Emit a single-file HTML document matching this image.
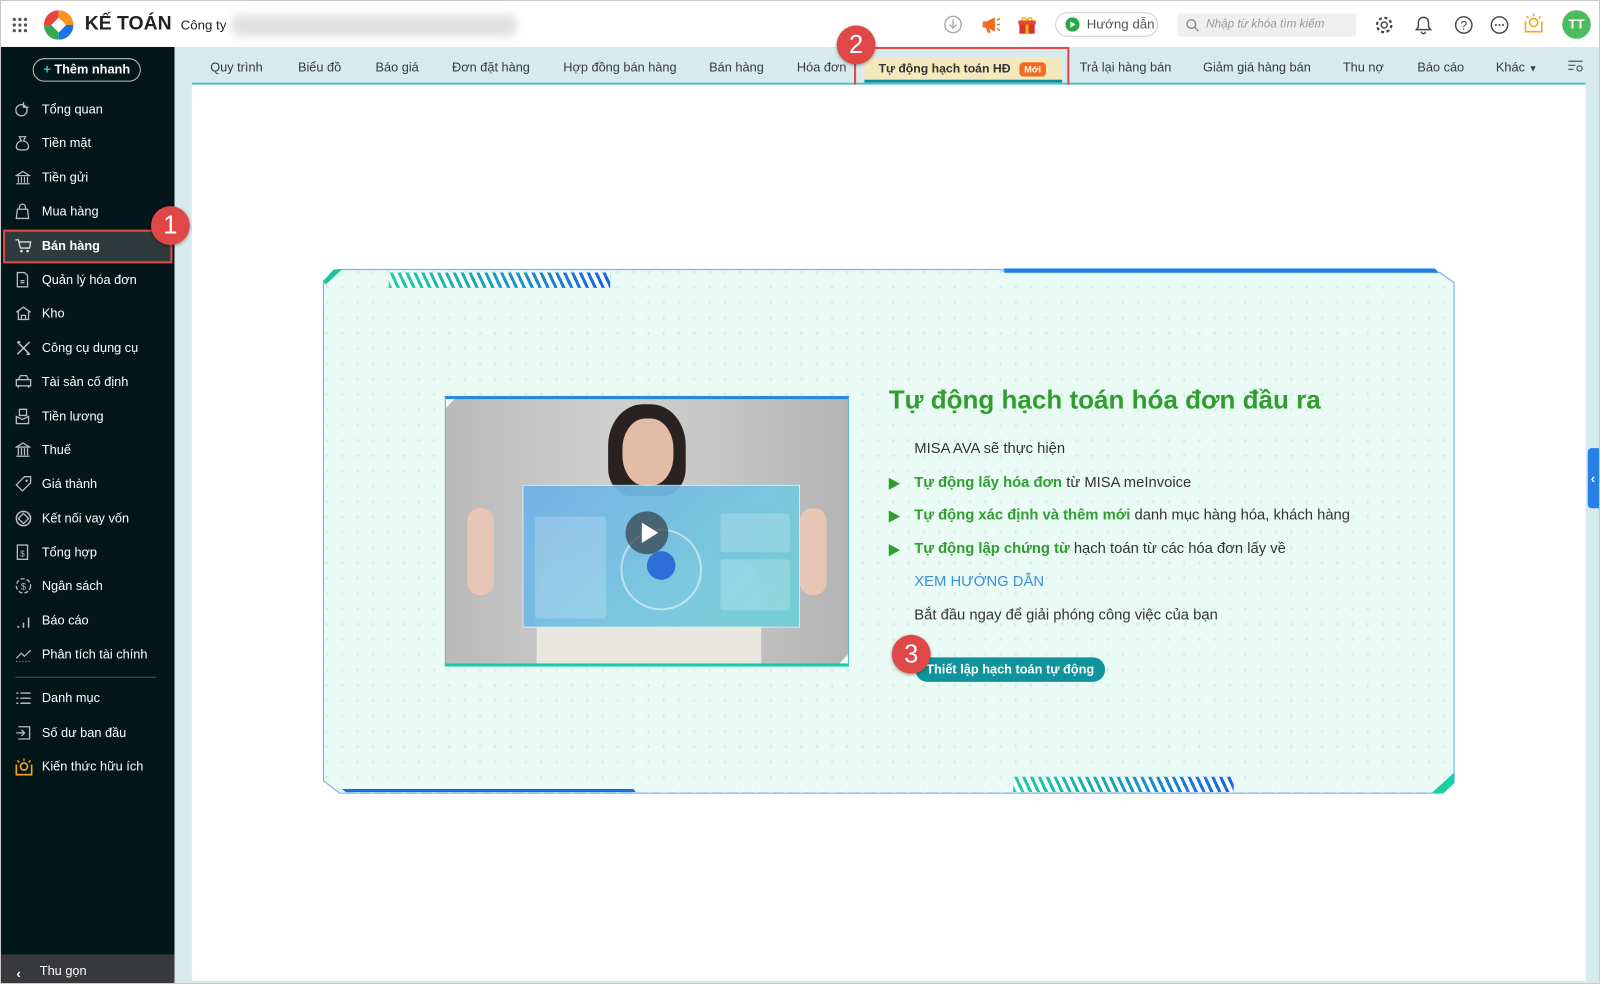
<!DOCTYPE html>
<html><head><meta charset="utf-8">
<style>
*{box-sizing:border-box;margin:0;padding:0}
html,body{width:1600px;height:984px;overflow:hidden;background:#fff;font-family:"Liberation Sans","Noto Sans CJK SC",sans-serif}
#w{position:absolute;left:0;top:0;width:1568px;height:964px;transform:scale(1.0204,1.0207);transform-origin:0 0;border:1px solid #c9c9c9;background:#d7ebee;overflow:hidden}
.a{position:absolute}
.top{left:0;top:0;width:1568px;height:45px;background:#fff}
.side{left:0;top:45px;width:170px;height:919px;background:#03161a}
.mi{position:absolute;left:0;width:170px;height:32px;color:#fff;font-size:12.5px;line-height:32px;padding-left:40px}
.mi svg{position:absolute;left:14px;top:8px}
.tab{position:absolute;top:58px;font-size:12.5px;color:#3a3a3a}
.ic{position:absolute;top:14px}
.txt{position:absolute;left:895px;font-size:14.5px;color:#333}
.g{color:#2f9e2f;font-weight:bold}
.arr{position:absolute;left:870px;width:0;height:0;border-left:11px solid #2f9e2f;border-top:6px solid transparent;border-bottom:6px solid transparent}
.badge{position:absolute;width:38px;height:38px;border-radius:50%;background:#e04848;color:#fff;font-size:25px;text-align:center;line-height:38px;box-shadow:0 1px 3px rgba(0,0,0,.4)}
</style></head><body>
<div id="w">
<div class="a top">
  <svg class="a" style="left:11px;top:16px" width="15" height="15"><g fill="#555"><circle cx="2" cy="2" r="1.6"/><circle cx="7.5" cy="2" r="1.6"/><circle cx="13" cy="2" r="1.6"/><circle cx="2" cy="7.5" r="1.6"/><circle cx="7.5" cy="7.5" r="1.6"/><circle cx="13" cy="7.5" r="1.6"/><circle cx="2" cy="13" r="1.6"/><circle cx="7.5" cy="13" r="1.6"/><circle cx="13" cy="13" r="1.6"/></g></svg>
  <svg class="a" style="left:42px;top:9px" width="29" height="29" viewBox="0 0 28 28"><path d="M14 0A14 14 0 0 0 0 14L14 14Z" fill="#e8453c"/><path d="M14 0A14 14 0 0 1 28 14L14 14Z" fill="#f7931e"/><path d="M28 14A14 14 0 0 1 14 28L14 14Z" fill="#1a73e8"/><path d="M14 28A14 14 0 0 1 0 14L14 14Z" fill="#34a853"/><rect x="9" y="9" width="10" height="10" fill="#fff" transform="rotate(45 14 14)"/></svg>
  <div class="a" style="left:82px;top:12px;font-size:19px;font-weight:bold;color:#222">KẾ TOÁN</div>
  <div class="a" style="left:176px;top:16px;font-size:13px;color:#222">Công ty</div>
  <div class="a" style="left:226px;top:13px;width:280px;height:22px;background:#e2e2e2;filter:blur(4px);border-radius:8px"></div>
  <svg class="ic" style="left:924px" width="18" height="18"><circle cx="9" cy="9" r="8" fill="none" stroke="#aaa" stroke-width="1.4"/><path d="M9 4v8M5.5 9l3.5 3.5 3.5-3.5" stroke="#aaa" stroke-width="1.4" fill="none"/></svg>
  <svg class="ic" style="left:960px" width="20" height="18"><path d="M2 6h4l8-4v14l-8-4H2z" fill="#f26b21"/><path d="M5 12l2 5h3l-2-5" fill="#f26b21"/><path d="M16 5l3-2M16 9h3M16 13l3 2" stroke="#f26b21" stroke-width="1.5"/></svg>
  <svg class="ic" style="left:996px" width="19" height="19"><rect x="2" y="6" width="15" height="12" fill="#d8322a"/><rect x="8" y="6" width="3" height="12" fill="#f5b400"/><rect x="1" y="5" width="17" height="4" fill="#e8453c"/><path d="M9.5 5C7 1 4 2 5 5M9.5 5C12 1 15 2 14 5" stroke="#f5b400" stroke-width="1.5" fill="none"/></svg>
  <div class="a" style="left:1033px;top:11px;width:101px;height:24px;border:1px solid #cfcfcf;border-radius:12px;font-size:13px;color:#555;line-height:22px;padding-left:30px">Hướng dẫn</div>
  <svg class="a" style="left:1043px;top:16px" width="14" height="14"><circle cx="7" cy="7" r="7" fill="#27a745"/><path d="M5 4l5 3-5 3z" fill="#fff"/></svg>
  <div class="a" style="left:1153px;top:12px;width:175px;height:23px;background:#efefef;border-radius:3px;font-size:11.5px;font-style:italic;color:#999;line-height:23px;padding-left:28px">Nhập từ khóa tìm kiếm</div>
  <svg class="a" style="left:1161px;top:17px" width="13" height="13"><circle cx="5.5" cy="5.5" r="4.2" fill="none" stroke="#888" stroke-width="1.4"/><path d="M8.5 8.5l4 4" stroke="#888" stroke-width="1.5"/></svg>
  <svg class="ic" style="left:1346px" width="19" height="19"><circle cx="9.5" cy="9.5" r="3" fill="none" stroke="#444" stroke-width="1.4"/><circle cx="9.5" cy="9.5" r="7" fill="none" stroke="#444" stroke-width="2.2" stroke-dasharray="3 2.5"/></svg>
  <svg class="ic" style="left:1385px" width="18" height="19"><path d="M9 2c-3.5 0-5 2.5-5 5.5v4L2 14h14l-2-2.5v-4C14 4.5 12.5 2 9 2zM7 16a2 2 0 0 0 4 0" fill="none" stroke="#444" stroke-width="1.4"/></svg>
  <svg class="ic" style="left:1424px" width="19" height="19"><circle cx="9.5" cy="9.5" r="8" fill="none" stroke="#444" stroke-width="1.4"/><text x="9.5" y="14" font-size="12" text-anchor="middle" fill="#444" font-family="Liberation Sans">?</text></svg>
  <svg class="ic" style="left:1459px" width="19" height="19"><circle cx="9.5" cy="9.5" r="8" fill="none" stroke="#444" stroke-width="1.4"/><circle cx="6" cy="9.5" r="1" fill="#444"/><circle cx="9.5" cy="9.5" r="1" fill="#444"/><circle cx="13" cy="9.5" r="1" fill="#444"/></svg>
  <svg class="a" style="left:1492px;top:11px" width="20" height="21"><path d="M2 9v10h16V9" fill="none" stroke="#f5a623" stroke-width="1.6"/><circle cx="10" cy="10" r="4" fill="none" stroke="#f5a623" stroke-width="1.6"/><path d="M10 1v3M3 4l2 2M17 4l-2 2" stroke="#f5a623" stroke-width="1.5"/></svg>
  <div class="a" style="left:1530px;top:9px;width:28px;height:28px;border-radius:50%;background:#4cbd5b;color:#fff;font-size:13px;font-weight:bold;text-align:center;line-height:28px">TT</div>
</div>

<div class="a side">
  <div class="a" style="left:31px;top:11px;width:106px;height:23px;border:1px solid #b8c2c4;border-radius:12px;color:#fff;font-size:12.5px;font-weight:bold;text-align:center;line-height:21px"><span style="color:#3dc9c1">+</span> Thêm nhanh</div>
  <div class="a" style="left:2px;top:179px;width:166px;height:33px;background:#2f3a3d;border:2px solid #e04848"></div>
</div>
<div class="a" style="left:0;top:45px">
<div class="mi" style="top:45px"><svg width="14" height="16"><circle cx="6" cy="9" r="5.5" fill="none" stroke="#bbb" stroke-width="1.3"/><path d="M8 1v5h5" fill="none" stroke="#bbb" stroke-width="1.3"/></svg>Tổng quan</div>
<div class="mi" style="top:78px"><svg width="14" height="16"><path d="M4 2h6l-2 4c4 1 5 4 5 6s-2 3-6 3-6-1-6-3 1-5 5-6z" fill="none" stroke="#bbb" stroke-width="1.3"/></svg>Tiền mặt</div>
<div class="mi" style="top:112px"><svg width="15" height="16"><path d="M1 6h13L7.5 2zM3 7v6M6 7v6M9 7v6M12 7v6M1 14h13" stroke="#bbb" stroke-width="1.2" fill="none"/></svg>Tiền gửi</div>
<div class="mi" style="top:145px"><svg width="14" height="16"><path d="M1 15l1-9h10l1 9zM4 6V4a3 3 0 0 1 6 0v2" fill="none" stroke="#bbb" stroke-width="1.3"/></svg>Mua hàng</div>
<div class="mi" style="top:179px;font-weight:bold"><svg width="16" height="16"><path d="M0 2h3l2 8h9l1-6H4" fill="none" stroke="#ddd" stroke-width="1.3"/><circle cx="6" cy="13" r="1.3" fill="#ddd"/><circle cx="12" cy="13" r="1.3" fill="#ddd"/></svg>Bán hàng</div>
<div class="mi" style="top:212px"><svg width="14" height="16"><path d="M2 1h7l3 3v11H2z M5 9h4M5 11h4" fill="none" stroke="#bbb" stroke-width="1.3"/></svg>Quản lý hóa đơn</div>
<div class="mi" style="top:245px"><svg width="16" height="16"><path d="M1 7l7-5 7 5M3 6v8h10V6M6 14v-4h4v4" fill="none" stroke="#bbb" stroke-width="1.3"/></svg>Kho</div>
<div class="mi" style="top:279px"><svg width="16" height="16"><path d="M2 2l12 12M14 2L2 14M2 2l3 0M14 14l-3 0" stroke="#bbb" stroke-width="1.5"/></svg>Công cụ dụng cụ</div>
<div class="mi" style="top:312px"><svg width="16" height="16"><path d="M3 6l2-4h6l2 4M1 6h14v6H1zM3 12v2M13 12v2" fill="none" stroke="#bbb" stroke-width="1.3"/></svg>Tài sản cố định</div>
<div class="mi" style="top:346px"><svg width="15" height="16"><path d="M4 1h7v6H4zM1 8l6 3 6-3v7H1z" fill="none" stroke="#bbb" stroke-width="1.3"/></svg>Tiền lương</div>
<div class="mi" style="top:379px"><svg width="15" height="16"><path d="M1 5h13L7.5 1zM3 6v7M6 6v7M9 6v7M12 6v7M1 14h13" stroke="#bbb" stroke-width="1.3" fill="none"/></svg>Thuế</div>
<div class="mi" style="top:412px"><svg width="16" height="16"><path d="M9 1h6v6l-8 8-6-6z" fill="none" stroke="#bbb" stroke-width="1.3"/><circle cx="11" cy="5" r="1.2" fill="#bbb"/></svg>Giá thành</div>
<div class="mi" style="top:446px"><svg width="16" height="16"><circle cx="8" cy="8" r="7" fill="none" stroke="#bbb" stroke-width="1.5"/><path d="M8 3l5 5-5 5-5-5z" fill="none" stroke="#bbb" stroke-width="1.3"/></svg>Kết nối vay vốn</div>
<div class="mi" style="top:479px"><svg width="14" height="16"><rect x="2" y="1" width="10" height="14" fill="none" stroke="#bbb" stroke-width="1.3"/><text x="7" y="12" font-size="8" text-anchor="middle" fill="#bbb">$</text></svg>Tổng hợp</div>
<div class="mi" style="top:512px"><svg width="16" height="16"><circle cx="8" cy="8" r="7" fill="none" stroke="#bbb" stroke-width="1.3" stroke-dasharray="4 2"/><text x="8" y="11.5" font-size="9" text-anchor="middle" fill="#bbb">$</text></svg>Ngân sách</div>
<div class="mi" style="top:546px"><svg width="16" height="16"><path d="M3 13v2M8 10v5M13 5v10" stroke="#bbb" stroke-width="1.6"/></svg>Báo cáo</div>
<div class="mi" style="top:579px"><svg width="16" height="16"><path d="M1 12l5-5 3 3 6-6" fill="none" stroke="#bbb" stroke-width="1.2"/><path d="M1 15h14" stroke="#bbb" stroke-dasharray="1 2"/></svg>Phân tích tài chính</div>
<div class="a" style="left:14px;top:617px;width:138px;height:1px;background:#4a5558"></div>
<div class="mi" style="top:622px"><svg width="16" height="16"><path d="M1 3h2M1 8h2M1 13h2M5 3h10M5 8h10M5 13h10" stroke="#bbb" stroke-width="1.4"/></svg>Danh mục</div>
<div class="mi" style="top:656px"><svg width="16" height="16"><path d="M3 2h11v12H3M1 8h8M6 5l3 3-3 3" fill="none" stroke="#bbb" stroke-width="1.3"/></svg>Số dư ban đầu</div>
<div class="mi" style="top:689px"><svg width="17" height="17"><path d="M1 6v10h15V6" fill="none" stroke="#f5a623" stroke-width="1.6"/><circle cx="8.5" cy="8" r="3.5" fill="none" stroke="#f5a623" stroke-width="1.6"/><path d="M8.5 0v2.5M2 2l2 2M15 2l-2 2" stroke="#f5a623" stroke-width="1.4"/></svg>Kiến thức hữu ích</div>
</div>
<div class="a" style="left:0;top:934px;width:170px;height:30px;background:#38393c;color:#fff;font-size:12.5px;line-height:32px;padding-left:38px">Thu gọn</div>
<div class="a" style="left:15px;top:945px;color:#fff;font-size:13px;font-weight:bold">‹</div>
<div class="badge" style="left:147px;top:201px">1</div>

<!-- tabs -->
<div class="a" style="left:187px;top:80px;width:1366px;height:2px;background:#4fc1cc"></div>
<div class="tab" style="left:205px">Quy trình</div>
<div class="tab" style="left:291px">Biểu đồ</div>
<div class="tab" style="left:367px">Báo giá</div>
<div class="tab" style="left:442px">Đơn đặt hàng</div>
<div class="tab" style="left:551px">Hợp đồng bán hàng</div>
<div class="tab" style="left:694px">Bán hàng</div>
<div class="tab" style="left:780px">Hóa đơn</div>
<div class="a" style="left:846px;top:55px;width:194px;height:25px;background:#f3e9bd;border-bottom:3px solid #0e8d99;border-radius:3px 3px 0 0"></div>
<div class="tab" style="left:860px;font-weight:bold;color:#333;font-size:12px;top:59px">Tự động hạch toán HĐ</div>
<div class="a" style="left:998px;top:60px;width:26px;height:14px;background:#f26b21;border-radius:4px;color:#fff;font-size:9px;font-weight:bold;text-align:center;line-height:14px">Mới</div>
<div class="a" style="left:836px;top:45px;width:211px;height:43px;border:2px solid #e04848"></div>
<div class="badge" style="left:819px;top:24px">2</div>
<div class="tab" style="left:1057px">Trả lại hàng bán</div>
<div class="tab" style="left:1178px">Giảm giá hàng bán</div>
<div class="tab" style="left:1315px">Thu nợ</div>
<div class="tab" style="left:1388px">Báo cáo</div>
<div class="tab" style="left:1465px">Khác <span style="font-size:9px">▼</span></div>
<svg class="a" style="left:1535px;top:57px" width="17" height="14"><path d="M1 2h14M1 6h7M1 10h5" stroke="#555" stroke-width="1.2"/><circle cx="12" cy="9" r="2.5" fill="none" stroke="#555" stroke-width="1.2"/></svg>

<!-- content -->
<div class="a" style="left:187px;top:82px;width:1366px;height:878px;background:#fff"></div>
<div class="a" style="left:1555px;top:438px;width:13px;height:59px;background:#2680e6;border-radius:4px 0 0 4px;color:#fff;font-size:13px;font-weight:bold;line-height:59px;padding-left:3px">‹</div>

<svg class="a" style="left:312px;top:258px" width="1120" height="524">
  <defs>
    <pattern id="p" width="15" height="15" patternUnits="userSpaceOnUse"><path d="M7.5 5.5v4M5.5 7.5h4" stroke="#cfe9e6" stroke-width=".8"/></pattern>
  </defs>
  <path d="M18 5H668l4 3H1098l14 10V508l-12 10H20l-16-12V16z" fill="#eafaf5" stroke="#7ab4ef" stroke-width="1.2"/>
  <path d="M18 5H668l4 3H1098l14 10V508l-12 10H20l-16-12V16z" fill="url(#p)"/>
  <path d="M4 16L14 5h8L6 20z" fill="#16c8a0"/>
  <path d="M670 4H1093l4 4H672z" fill="#1d7fe8"/>
  <path d="M1112 498v10l-10 10h-12z" fill="#16d0a0"/>
  <path d="M22 514H308l2 3H26z" fill="#1c6fd8"/>
</svg>
<div class="a" style="left:380px;top:266px;width:217px;height:15px;background:repeating-linear-gradient(65deg,transparent 0 3px,rgba(255,255,255,1) 3px 7px),linear-gradient(90deg,#1bd3a0,#1466e6)"></div>
<div class="a" style="left:992px;top:760px;width:216px;height:15px;background:repeating-linear-gradient(65deg,transparent 0 3px,#fff 3px 7px),linear-gradient(90deg,#1bd3a0,#1466e6)"></div>

<!-- video image -->
<div class="a" style="left:435px;top:387px;width:396px;height:265px;background:linear-gradient(90deg,#b9b9b9,#cfcfcf 40%,#c9c9c9 60%,#b4b4b4);overflow:hidden;clip-path:polygon(3% 0,100% 0,100% 95%,97% 100%,0 100%,0 5%)">
  <div class="a" style="left:160px;top:8px;width:76px;height:90px;border-radius:45% 45% 30% 30%;background:#2a2220"></div>
  <div class="a" style="left:174px;top:22px;width:50px;height:66px;border-radius:45%;background:#e2bca6"></div>
  <div class="a" style="left:90px;top:160px;width:220px;height:110px;background:#e9e7df;border-radius:30px 30px 0 0"></div>
  <div class="a" style="left:22px;top:110px;width:26px;height:85px;background:#e8c6b5;border-radius:12px"></div>
  <div class="a" style="left:348px;top:110px;width:26px;height:85px;background:#e8c6b5;border-radius:12px"></div>
  <div class="a" style="left:76px;top:87px;width:272px;height:140px;background:linear-gradient(135deg,#6fb0e8,#74c6e0 60%,#6ed0d4);opacity:.93;border:1px solid #cdeffb"></div>
  <div class="a" style="left:88px;top:118px;width:70px;height:100px;background:rgba(255,255,255,.2);border-radius:3px"></div>
  <div class="a" style="left:270px;top:115px;width:68px;height:38px;background:rgba(255,255,255,.2);border-radius:3px"></div>
  <div class="a" style="left:270px;top:160px;width:68px;height:50px;background:rgba(255,255,255,.2);border-radius:3px"></div>
  <div class="a" style="left:172px;top:130px;width:80px;height:80px;border-radius:50%;border:2px solid rgba(255,255,255,.5)"></div>
  <div class="a" style="left:198px;top:152px;width:28px;height:28px;border-radius:50%;background:#2c6fd6"></div>
  <div class="a" style="left:177px;top:113px;width:42px;height:42px;border-radius:50%;background:rgba(55,70,80,.75)"></div>
  <div class="a" style="left:193px;top:124px;width:0;height:0;border-left:16px solid #fff;border-top:10px solid transparent;border-bottom:10px solid transparent"></div>
</div>
<div class="a" style="left:435px;top:387px;width:396px;height:265px;border:1px solid #5db2e8;border-top:3px solid #1e8be0;border-bottom:3px solid #16c8a8"></div>

<div class="a" style="left:870px;top:377px;font-size:25.5px;font-weight:bold;color:#2f9e2f">Tự động hạch toán hóa đơn đầu ra</div>
<div class="txt" style="top:431px">MISA AVA sẽ thực hiện</div>
<div class="arr" style="top:467px"></div><div class="txt" style="top:464px"><span class="g">Tự động lấy hóa đơn</span> từ MISA meInvoice</div>
<div class="arr" style="top:499px"></div><div class="txt" style="top:496px"><span class="g">Tự động xác định và thêm mới</span> danh mục hàng hóa, khách hàng</div>
<div class="arr" style="top:532px"></div><div class="txt" style="top:529px"><span class="g">Tự động lập chứng từ</span> hạch toán từ các hóa đơn lấy về</div>
<div class="txt" style="top:561px;color:#3a8fd6">XEM HƯỚNG DẪN</div>
<div class="txt" style="top:594px">Bắt đầu ngay để giải phóng công việc của bạn</div>
<div class="a" style="left:896px;top:643px;width:186px;height:24px;background:#11939b;border-radius:12px;color:#fff;font-size:12.5px;font-weight:bold;text-align:center;line-height:24px">Thiết lập hạch toán tự động</div>
<div class="badge" style="left:873px;top:621px">3</div>
</div>
</body></html>
